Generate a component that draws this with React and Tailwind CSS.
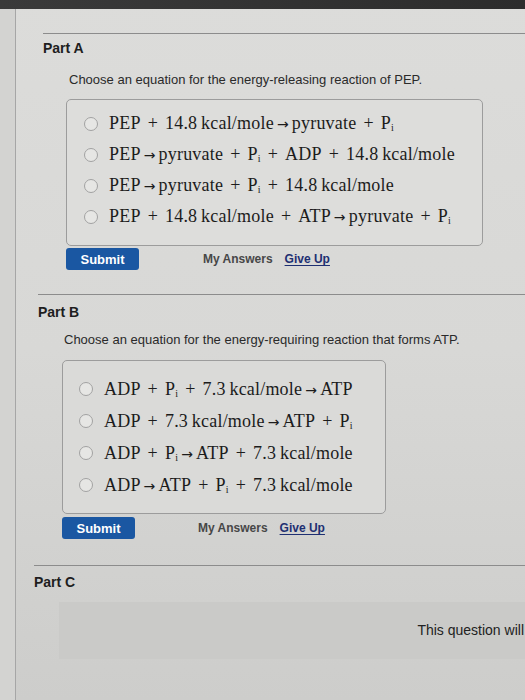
import React from 'react';

const sans = { fontFamily: '"Liberation Sans", Arial, sans-serif' };

function Pi() {
  return (
    <span>
      P<sub className="text-[10px] relative -bottom-[2px] align-baseline">i</sub>
    </span>
  );
}

const Plus = () => <span className="mx-[7px]">+</span>;
const Arrow = () => (
  <span className="mx-[3px] text-[14px]" style={{ fontFamily: '"DejaVu Sans", sans-serif' }}>
    →
  </span>
);

const partA = [
  ['PEP', '+', '14.8\u2009kcal/mole', '→', 'pyruvate', '+', 'Pi'],
  ['PEP', '→', 'pyruvate', '+', 'Pi', '+', 'ADP', '+', '14.8\u2009kcal/mole'],
  ['PEP', '→', 'pyruvate', '+', 'Pi', '+', '14.8\u2009kcal/mole'],
  ['PEP', '+', '14.8\u2009kcal/mole', '+', 'ATP', '→', 'pyruvate', '+', 'Pi'],
];

const partB = [
  ['ADP', '+', 'Pi', '+', '7.3\u2009kcal/mole', '→', 'ATP'],
  ['ADP', '+', '7.3\u2009kcal/mole', '→', 'ATP', '+', 'Pi'],
  ['ADP', '+', 'Pi', '→', 'ATP', '+', '7.3\u2009kcal/mole'],
  ['ADP', '→', 'ATP', '+', 'Pi', '+', '7.3\u2009kcal/mole'],
];

function Equation({ tokens }) {
  return (
    <span
      className="text-[18px] text-[#1c1c1c] whitespace-nowrap tracking-[0.2px]"
      style={{ fontFamily: '"Liberation Serif", "Times New Roman", serif' }}
    >
      {tokens.map((t, i) => {
        if (t === '+') return <Plus key={i} />;
        if (t === '→') return <Arrow key={i} />;
        if (t === 'Pi') return <Pi key={i} />;
        return <span key={i}>{t}</span>;
      })}
    </span>
  );
}

function Radio() {
  return <span className="w-[14px] h-[14px] rounded-full border-[1.5px] border-[#a2a2a2] bg-[#e6e6e4] shrink-0" />;
}

function Actions({ gap }) {
  return (
    <div className="flex items-center h-[22px]" style={sans}>
      <button className="w-[73px] h-[22px] rounded-[3px] bg-[#1a57a2] text-white text-[13px] font-bold leading-none">
        Submit
      </button>
      <span className={`${gap} text-[12px] font-bold text-[#474747]`}>My Answers</span>
      <span className="ml-[12px] text-[12px] font-bold text-[#1e2f72] underline underline-offset-2">Give Up</span>
    </div>
  );
}

export default function App() {
  return (
    <div className="w-[525px] h-[700px] overflow-hidden flex flex-col bg-linear-to-b from-[#dcdcda] via-[#d8d8d6] to-[#cdcdcb]">
      <div className="h-[9px] bg-linear-to-r from-[#3a3a3a] to-[#2c2c2c] shrink-0" />
      <div className="flex flex-1">
        <div className="w-[16px] border-r border-[#a6a6a6] bg-[#d3d3d1]" />
        <main className="flex-1 flex flex-col" style={sans}>
          {/* Part A */}
          <div className="mt-[24px] ml-[27px] border-t border-[#8c8c8c]" />
          <h2 className="mt-[5px] ml-[27px] text-[14px] leading-[18px] font-bold text-[#1e1e1e]">Part A</h2>
          <p className="mt-[14px] ml-[53px] text-[13px] leading-[18px] text-[#2a2a2a]">
            Choose an equation for the energy-releasing reaction of PEP.
          </p>
          <div className="mt-[10px] ml-[50px] w-[417px] border border-[#9c9c9c] rounded-[5px] bg-[#dddddb] pt-[8px] pb-[13px] pl-[17px]">
            {partA.map((eq, i) => (
              <div key={i} className="h-[31px] flex items-center gap-[11px]">
                <Radio />
                <Equation tokens={eq} />
              </div>
            ))}
          </div>
          <div className="mt-[2px] ml-[50px]">
            <Actions gap="ml-[64px]" />
          </div>

          {/* Part B */}
          <div className="mt-[24px] ml-[22px] border-t border-[#8c8c8c]" />
          <h2 className="mt-[8px] ml-[22px] text-[14px] leading-[18px] font-bold text-[#1e1e1e]">Part B</h2>
          <p className="mt-[10px] ml-[48px] text-[13px] leading-[18px] text-[#2a2a2a]">
            Choose an equation for the energy-requiring reaction that forms ATP.
          </p>
          <div className="mt-[11px] ml-[46px] w-[324px] border border-[#9c9c9c] rounded-[5px] bg-[#dadad8] pt-[12px] pb-[12px] pl-[16px]">
            {partB.map((eq, i) => (
              <div key={i} className="h-[32px] flex items-center gap-[11px]">
                <Radio />
                <Equation tokens={eq} />
              </div>
            ))}
          </div>
          <div className="mt-[3px] ml-[46px]">
            <Actions gap="ml-[63px]" />
          </div>

          {/* Part C */}
          <div className="mt-[26px] ml-[18px] border-t border-[#8c8c8c]" />
          <h2 className="mt-[7px] ml-[18px] text-[14px] leading-[18px] font-bold text-[#1e1e1e]">Part C</h2>
          <div className="mt-[11px] ml-[43px] h-[57px] bg-[#cacac8] flex items-center justify-end pr-[1px] overflow-hidden">
            <span className="text-[14px] text-[#222] whitespace-nowrap">This question will</span>
          </div>
        </main>
      </div>
    </div>
  );
}
